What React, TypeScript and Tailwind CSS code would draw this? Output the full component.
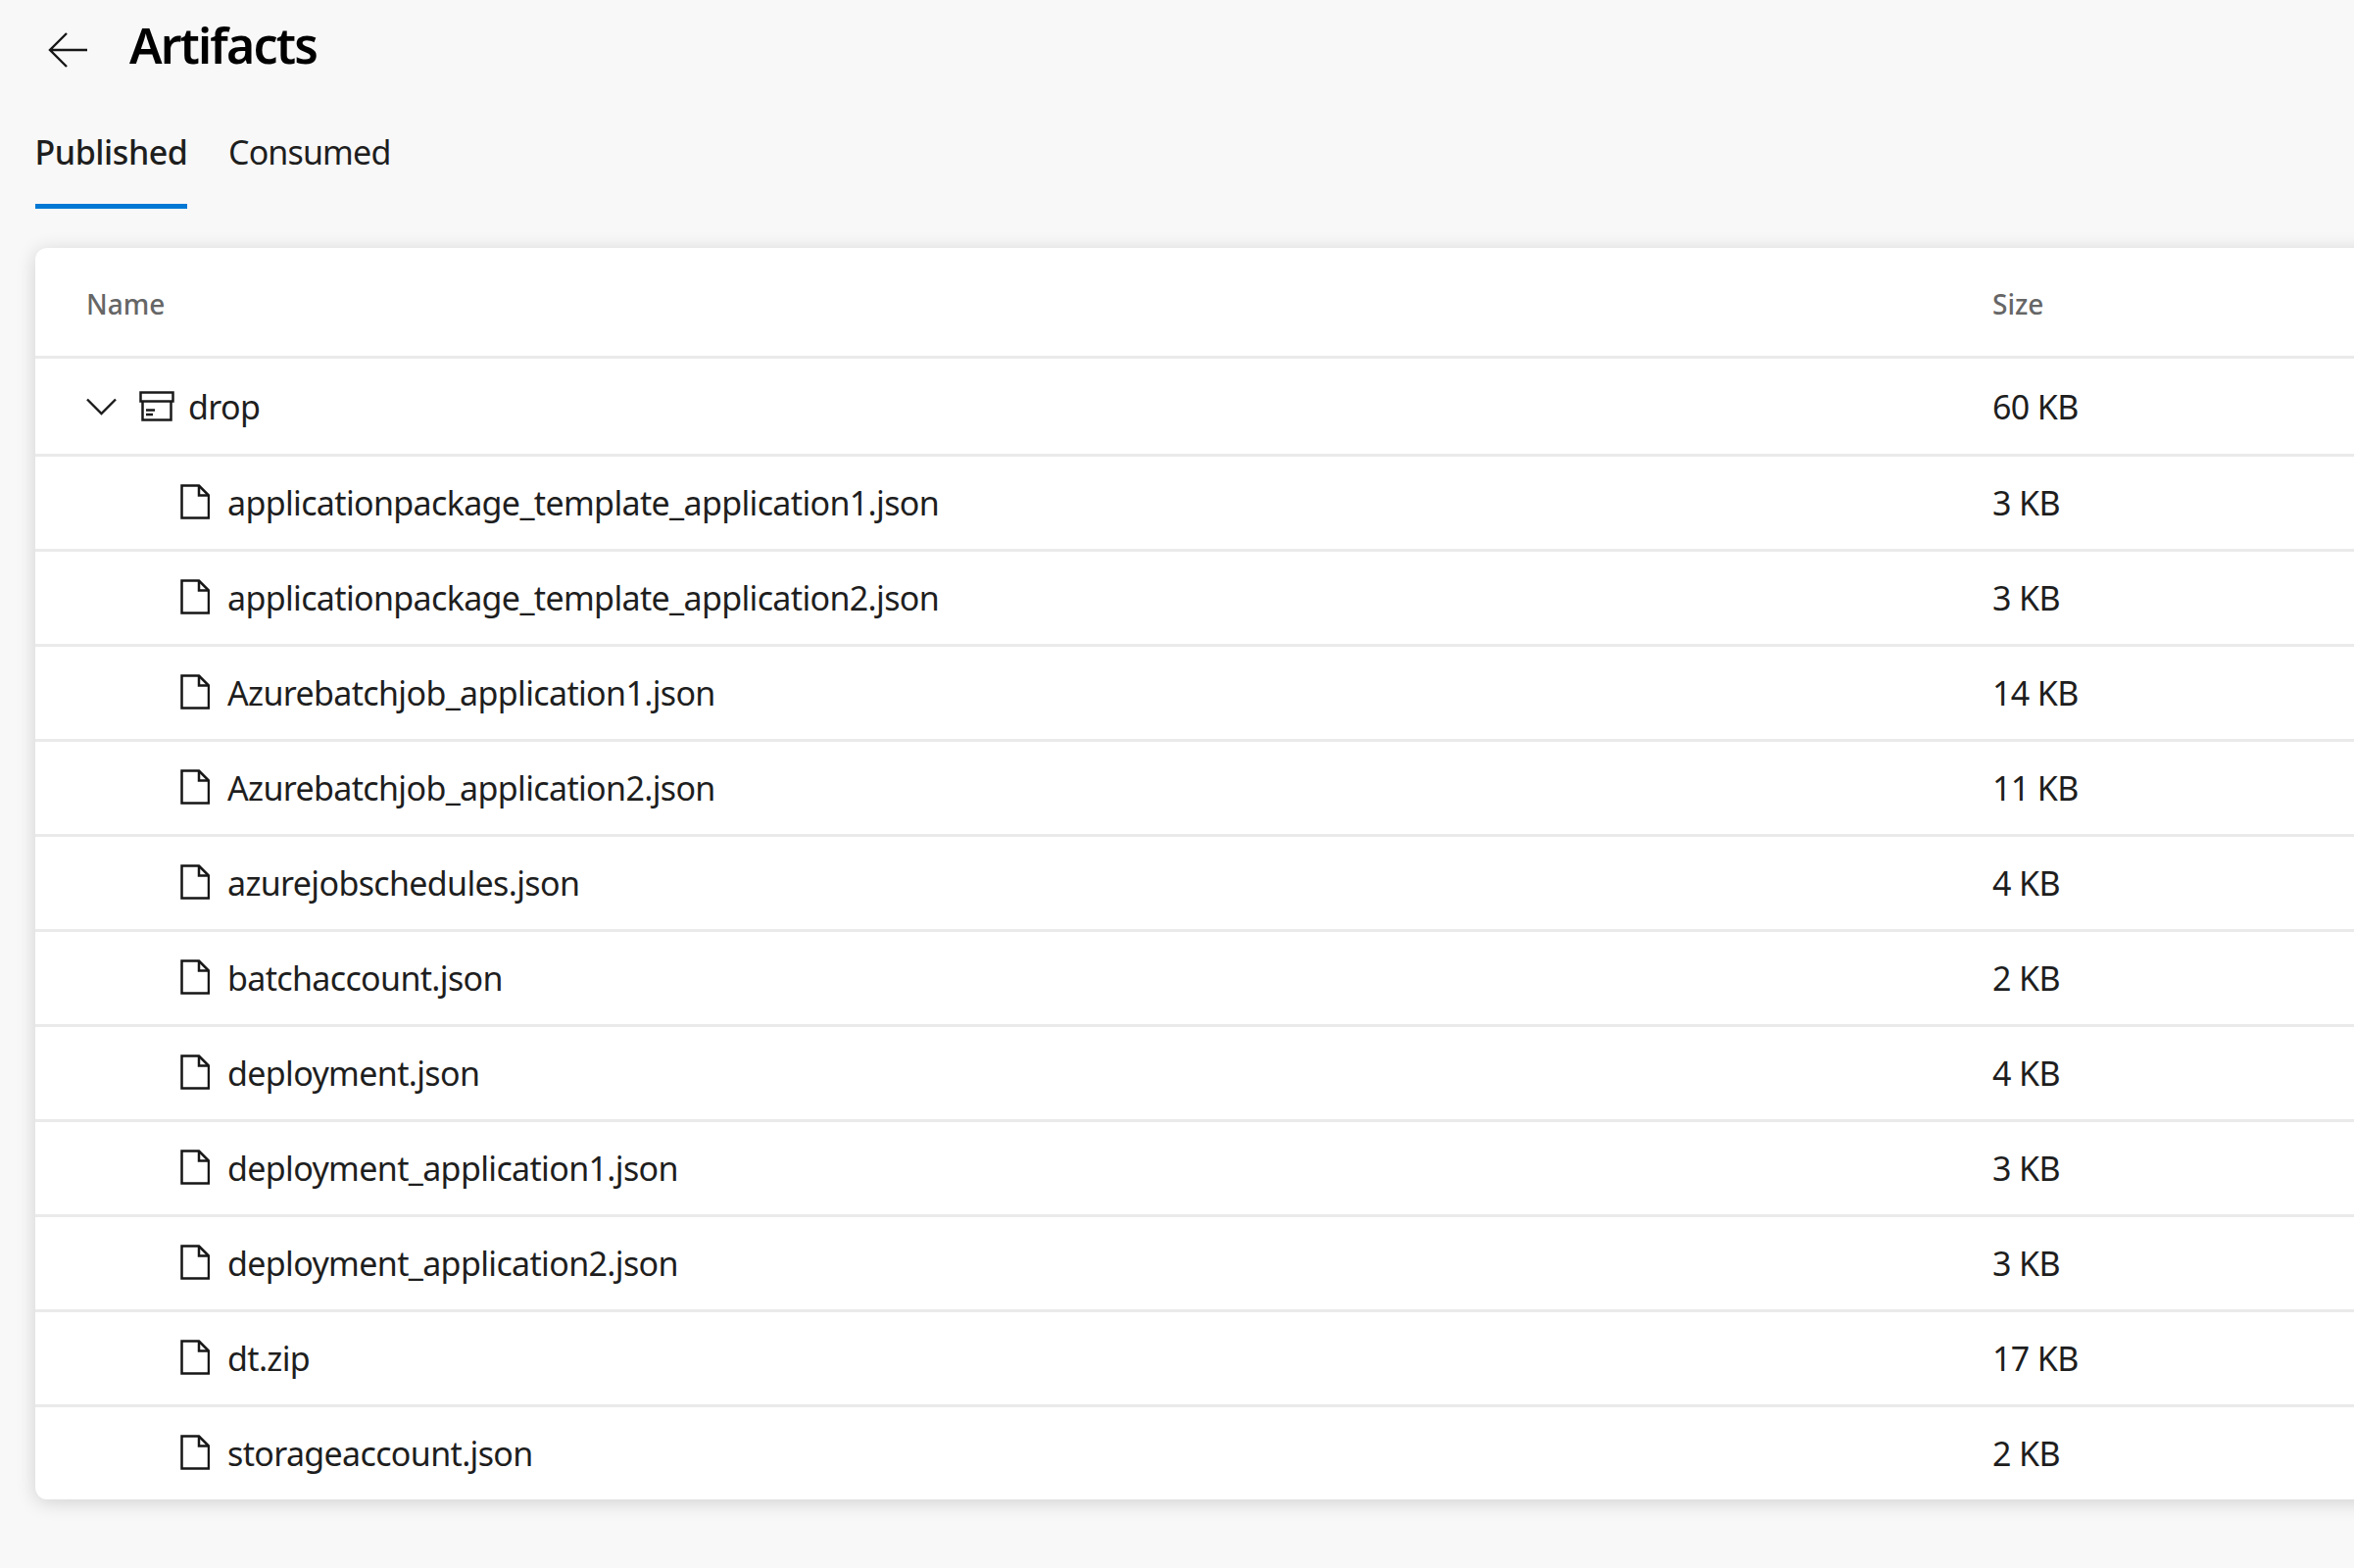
const files = [
  { name: "applicationpackage_template_application1.json", size: "3 KB" },
  { name: "applicationpackage_template_application2.json", size: "3 KB" },
  { name: "Azurebatchjob_application1.json", size: "14 KB" },
  { name: "Azurebatchjob_application2.json", size: "11 KB" },
  { name: "azurejobschedules.json", size: "4 KB" },
  { name: "batchaccount.json", size: "2 KB" },
  { name: "deployment.json", size: "4 KB" },
  { name: "deployment_application1.json", size: "3 KB" },
  { name: "deployment_application2.json", size: "3 KB" },
  { name: "dt.zip", size: "17 KB" },
  { name: "storageaccount.json", size: "2 KB" },
];

const FileIcon = () => (
  <svg width="30" height="36" viewBox="0 0 30 36" fill="none" stroke="#161616" strokeWidth="2.5" className="mb-[3px] shrink-0">
    <path d="M1.5 1.5H19L29 11.5V34.5H1.5V1.5Z" />
    <path d="M19 1.5V11.5H29" />
  </svg>
);

const BoxIcon = () => (
  <svg width="36" height="31" viewBox="0 0 36 31" fill="none" stroke="#1a1a1a" strokeWidth="2.5" className="shrink-0">
    <rect x="1.5" y="1.5" width="33" height="9" />
    <path d="M3.5 10.5V29.5H32.5V10.5" />
    <path d="M7 19.5H16M7 24H14" />
  </svg>
);

export default function App() {
  return (
    <div className="h-[1600px] w-[2402px] overflow-hidden bg-[#f8f8f8] font-['Noto_Sans','Open_Sans',sans-serif] text-[#1e1e1e]">
      <div className="flex h-[100px] items-center pl-[49px] pb-[8px]">
        <svg width="40" height="36" viewBox="0 0 40 36" fill="none" stroke="#161616" strokeWidth="2.4" className="mt-[10px]">
          <path d="M40 18H2M19 1L2 18L19 35" />
        </svg>
        <h1 className="ml-[43px] text-[50px] leading-none font-semibold tracking-[-1.85px] text-black">Artifacts</h1>
      </div>

      <div className="ml-[36px] flex h-[113px] gap-[42px]">
        <div className="flex h-[113px] w-[155px] items-center justify-center border-b-[5px] border-[#0078d4] pt-[3px] text-[34px] font-medium tracking-[-0.45px]">
          Published
        </div>
        <div className="flex h-[113px] items-center pb-[2px] text-[34px] tracking-[-0.85px]">Consumed</div>
      </div>

      <div className="ml-[36px] mt-[40px] w-[2400px] rounded-l-[12px] bg-white shadow-[0_3px_20px_rgba(0,0,0,0.16)]">
        <div className="grid h-[113px] grid-cols-[1945px_1fr] items-center border-b-[3px] border-[#eaeaea] pl-[52px] pt-[3px] text-[28px] font-medium tracking-[0px] text-[#666666]">
          <span>Name</span>
          <span>Size</span>
        </div>
        <div className="grid h-[100px] grid-cols-[1945px_1fr] items-center border-b-[3px] border-[#eaeaea] pl-[52px] text-[34px] tracking-[-0.65px]">
          <div className="flex items-center">
            <svg width="31" height="18" viewBox="0 0 31 18" fill="none" stroke="#1a1a1a" strokeWidth="2.4" className="shrink-0">
              <path d="M1 1.5L15.5 16L30 1.5" />
            </svg>
            <span className="ml-[23px]">
              <BoxIcon />
            </span>
            <span className="ml-[14px] mt-[2px]">drop</span>
          </div>
          <span className="mt-[2px]">60 KB</span>
        </div>
        {files.map((f, i) => (
          <div
            key={f.name}
            className={`grid grid-cols-[1945px_1fr] items-center pl-[52px] text-[34px] tracking-[-0.65px] ${
              i === files.length - 1 ? "h-[94px]" : "h-[97px] border-b-[3px] border-[#eaeaea]"
            }`}
          >
            <div className="flex items-center pl-[96px]">
              <FileIcon />
              <span className="ml-[18px]">{f.name}</span>
            </div>
            <span>{f.size}</span>
          </div>
        ))}
      </div>
    </div>
  );
}
